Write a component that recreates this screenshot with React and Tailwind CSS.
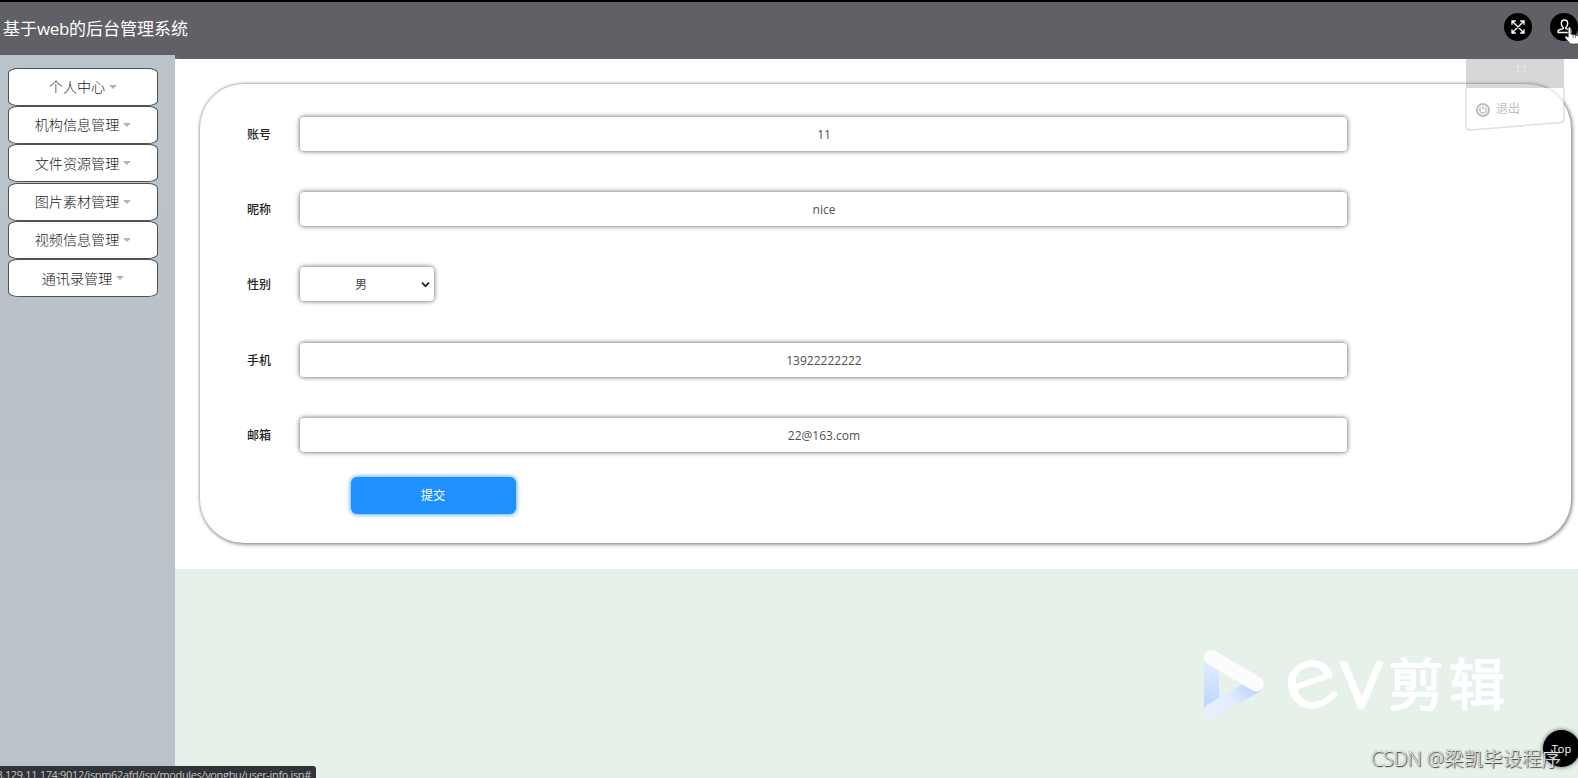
import React from 'react';

const menu = ['个人中心', '机构信息管理', '文件资源管理', '图片素材管理', '视频信息管理', '通讯录管理'];

const fields = [
  { label: '账号', value: '11' },
  { label: '昵称', value: 'nice' },
  { label: '性别', value: '男', select: true },
  { label: '手机', value: '13922222222' },
  { label: '邮箱', value: '22@163.com' },
];

function Header() {
  return (
    <header className="flex h-[59px] shrink-0 items-center justify-between border-t-2 border-black bg-[#606166] pl-[3px]">
      <h1 className="relative -top-[2px] text-[17px] leading-6 text-white"><span>基于</span><span className="tracking-[-0.4px]">web</span>的后台管理系统</h1>
      <div className="relative -top-[4px] flex gap-[18px]">
        <span className="flex size-7 items-center justify-center rounded-full bg-black">
          <svg className="size-[14px]" viewBox="0 0 14 14" fill="none" stroke="white" strokeWidth="1.3">
            <path d="M1 4.8V1h3.8M9.2 1H13v3.8M13 9.2V13H9.2M4.8 13H1V9.2M1.5 1.5l11 11M12.5 1.5l-11 11" />
          </svg>
        </span>
        <span className="flex size-7 items-center justify-center rounded-full bg-black">
          <svg className="size-[15px]" viewBox="0 0 15 15" fill="none" stroke="white" strokeWidth="1.4">
            <path d="M7.5 1C5.2 1 4.3 2.6 4.3 4.6c0 1.8.8 3.2 1.9 4v1L1.2 11.300v2.200h12.600v-2.200L8.800 9.600v-1c1.100-.8 1.900-2.200 1.900-4C10.700 2.600 9.800 1 7.500 1Z" />
          </svg>
        </span>
      </div>
    </header>
  );
}

function Sidebar() {
  return (
    <aside className="-mt-1 flex w-[175px] shrink-0 flex-col bg-linear-to-b from-[#b9c3c9] to-[#bcc2ca] pl-2 pt-[12.5px] shadow-[2px_6px_5px_#e4effc]">
      {menu.map((m) => (
        <button key={m} className="mb-[0.4px] flex h-[38px] w-[150px] shrink-0 items-center justify-center gap-1 rounded-[10px/5px] border border-[#4c5258] bg-white text-[14.1px] font-light text-[#222]">
          <span>{m}</span>
          <i className="border-x-4 border-t-4 border-x-transparent border-t-[#b4b4b4]" />
        </button>
      ))}
    </aside>
  );
}

function ProfileForm() {
  return (
    <div className="h-[509.500px] bg-white pl-[25px] pt-[25px]">
      <form className="h-[459px] w-[1371px] rounded-[44px] bg-white pl-[47px] pt-[33px] shadow-[0_0_3px_#999,1px_1px_4px_#777]">
        <div className="flex flex-col gap-[41.200px]">
          {fields.map((f) => (
            <div key={f.label} className="flex h-[34px] items-center text-[12px]">
              <label className="w-[53px] pt-[2px] font-medium text-[#222]">{f.label}</label>
              {f.select ? (
                <div className="flex h-full w-[134px] items-center rounded-[4px] pl-[55px] pr-1 text-[#444] shadow-[0_0_5px_#555]">
                  <span className="grow pt-[2px]">{f.value}</span>
                  <svg className="size-[9px]" viewBox="0 0 9 9" fill="none" stroke="#222" strokeWidth="1.7"><path d="M1 2.700l3.500 3.500L8 2.700" /></svg>
                </div>
              ) : (
                <div className="flex h-full w-[1047px] items-center justify-center rounded-[4px] pl-px pt-[2px] text-[12px] text-[#505050] shadow-[0_0_5px_#555]">{f.value}</div>
              )}
            </div>
          ))}
        </div>
        <button type="button" className="ml-[103.500px] mt-[25px] flex h-[37px] w-[165px] items-center justify-center rounded-[6px] bg-[#1e90ff] pt-[2px] text-[12.300px] text-white shadow-[0_0_5px_#1e90ff]">提交</button>
      </form>
    </div>
  );
}

function AccountMenu() {
  return (
    <div className="absolute left-[1466px] top-[59px] w-[98px] text-[#c0c0c0]">
      <svg className="absolute inset-0 h-[74px] w-[100px] overflow-visible" viewBox="0 0 100 74">
        <path d="M0 29H98V61Q98 63 95 63.500L4 71Q1 71 0 68Z" fill="white" fillOpacity=".7" />
        <path d="M0 29V68Q1 71 4 71L95 63.500Q98 63 98 61V29" fill="none" stroke="#000" strokeOpacity=".13" strokeWidth="1.500" />
      </svg>
      <div className="relative flex h-[29px] items-center justify-center bg-[#7a7a7d]/30 pb-2 pl-3 text-[12px] font-light text-[#f2f2f2]">11</div>
      <div className="relative flex h-[42px] items-center gap-[6px] pl-[10px] text-[12px]">
        <svg className="relative top-[1px] size-[14px]" viewBox="0 0 14 14" fill="none" stroke="#bbb" strokeWidth="2">
          <circle cx="7" cy="7" r="6" /><path d="M4.900 4.500a3.200 3.200 0 1 0 4.200 0M7 3v4" strokeWidth="1.300" />
        </svg>
        <span>退出</span>
      </div>
    </div>
  );
}

function Watermark() {
  return (
    <div className="absolute left-[1204px] top-[646px] h-[76px] w-[310px]">
      <svg className="h-[76px] w-[310px] overflow-visible" viewBox="0 0 310 76">
        <defs>
          <linearGradient id="side" x1="0" y1="0" x2="0" y2="1"><stop stopColor="#e6edff" /><stop offset="1" stopColor="#b8d4ff" /></linearGradient>
          <linearGradient id="low" gradientUnits="userSpaceOnUse" x1="8" y1="66" x2="52" y2="40"><stop stopColor="#e9efff" /><stop offset=".45" stopColor="#e4ebff" /><stop offset="1" stopColor="#b8d1ff" /></linearGradient>
        </defs>
        <path d="M0 12H15V58L0 66Z" fill="url(#side)" />
        <path d="M7.500 65L52 39" stroke="url(#low)" strokeWidth="15" strokeLinecap="round" />
        <path d="M7.500 11.500L52.500 38" stroke="#fcfcff" strokeWidth="15" strokeLinecap="round" />
        <g fill="white" stroke="white" strokeLinejoin="round">
          <text x="81" y="61" fontSize="88" fontWeight="300" strokeWidth="3" textLength="53" lengthAdjust="spacingAndGlyphs" transform="rotate(-19 107 40)" className="font-['Lato',sans-serif]">e</text>
          <text x="136" y="61" fontSize="89" fontWeight="300" strokeWidth="3.5" textLength="43" lengthAdjust="spacingAndGlyphs" className="font-['Lato',sans-serif]">v</text>
          <text x="184" y="59" fontSize="56" fontWeight="400" strokeWidth="1.500" textLength="117" className="font-['Noto_Sans_CJK_SC',sans-serif]">剪辑</text>
        </g>
      </svg>
    </div>
  );
}

export default function App() {
  return (
    <div className="relative flex h-[778px] w-[1578px] flex-col overflow-hidden bg-[#e6f1e9] font-['Open_Sans','Noto_Sans_CJK_SC',sans-serif]">
      <Header />
      <div className="flex min-h-0 grow">
        <Sidebar />
        <main className="grow"><ProfileForm /></main>
      </div>
      <AccountMenu />
      <svg className="absolute left-[1563px] top-[26px] h-[20px] w-[17px]" viewBox="0 0 17 20">
        <path d="M5.500 1.500c1-.8 2.300-.2 2.300 1V8l6 1.400c2 .5 2.500 1.600 2.200 3.200L15 18H7.500L2.300 12.200c-1-1.300.3-2.800 1.800-1.800l1.100.9V2.500Z" fill="white" stroke="#333" strokeWidth=".7" />
        <path d="M10 9v3M12.500 9.700V12" stroke="#444" strokeWidth=".7" />
      </svg>
      <Watermark />
      <div className="absolute left-[1543px] top-[730px] flex size-[37px] items-center justify-center rounded-full bg-black pt-[2px] text-[11px] text-white shadow-[0_0_4px_#555]">Top</div>
      <div className="absolute left-[1371px] top-[744px] whitespace-nowrap text-[19.500px] font-light leading-[30px] text-[#e8eae9] [text-shadow:1px_1px_1px_#333,0_0_1px_#666]">CSDN @梁凯毕设程序</div>
      <div className="absolute left-0 top-[766px] flex h-[20px] w-[316px] justify-end overflow-hidden rounded-tr-[3px] bg-[#313338] pr-[5px] pt-[1px] text-[11px] leading-[16px] tracking-[-0.350px] text-[#c2c4c8]">
        <span className="whitespace-nowrap">43.129.11.174:9012/jspm62afd/jsp/modules/yonghu/user-info.jsp#</span>
      </div>
    </div>
  );
}
